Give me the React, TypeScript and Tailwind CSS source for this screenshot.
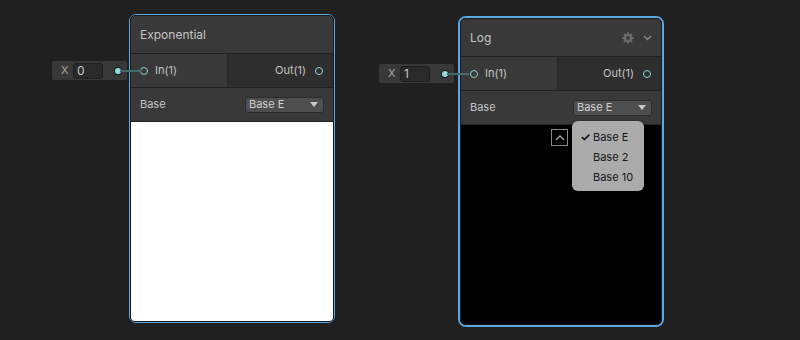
import React from "react";

const font = { fontFamily: "Inter, 'Noto Sans', sans-serif" };

function Gear() {
  return (
    <svg width="12" height="12" viewBox="0 0 12 12">
      <g fill="#6a6a6a">
        <circle cx="6" cy="6" r="4.3" />
        <rect x="5" y="0.3" width="2" height="2.4" />
        <rect x="5" y="9.3" width="2" height="2.4" />
        <rect x="0.3" y="5" width="2.4" height="2" />
        <rect x="9.3" y="5" width="2.4" height="2" />
        <rect x="5" y="0.3" width="2" height="2.4" transform="rotate(45 6 6)" />
        <rect x="5" y="9.3" width="2" height="2.4" transform="rotate(45 6 6)" />
        <rect x="0.3" y="5" width="2.4" height="2" transform="rotate(45 6 6)" />
        <rect x="9.3" y="5" width="2.4" height="2" transform="rotate(45 6 6)" />
      </g>
      <circle cx="6" cy="6" r="1.9" fill="#393939" />
    </svg>
  );
}

function ChevronDown() {
  return (
    <svg width="9" height="6" viewBox="0 0 9 6">
      <path d="M1 1 L4.5 4.5 L8 1" stroke="#8a8a8a" strokeWidth="1.4" fill="none" />
    </svg>
  );
}

function Port({ filled }: { filled?: boolean }) {
  return filled ? (
    <span className="block w-[6px] h-[6px] rounded-full bg-[#8fdde3] ring-1 ring-[#1d1d1d]" />
  ) : (
    <span className="block w-[8px] h-[8px] rounded-full border border-[#8fd2d8]" />
  );
}

function InputField({ value }: { value: string }) {
  return (
    <div className="flex items-center w-[75px] h-[19px] bg-[#383838] rounded-[2px]">
      <span className="ml-[9px] w-[12px] text-[11px] text-[#a8a8a8]">X</span>
      <div className="w-[30px] h-[16px] bg-[#2a2a2a] border border-[#1e1e1e] rounded-[3px] flex items-center pl-[3px] text-[12px] text-[#c8c8c8] leading-none">
        {value}
      </div>
      <div className="ml-[12px]">
        <Port filled />
      </div>
    </div>
  );
}

function Dropdown() {
  return (
    <div className="flex items-center justify-between w-[79px] h-[16px] bg-[#4e4e4e] border border-[#2c2c2c] rounded-[3px] pl-[3px] pr-[5px] text-[11px] text-[#d0d0d0]">
      <span>Base E</span>
      <svg width="8" height="5" viewBox="0 0 8 5">
        <path d="M0 0 L8 0 L4 5 Z" fill="#c8c8c8" />
      </svg>
    </div>
  );
}

function NodeBody({ title, icons, dark }: { title: string; icons?: boolean; dark?: boolean }) {
  return (
    <div className="flex flex-col h-full border border-[#1a1a1a] rounded-[5px] overflow-hidden bg-[#393939]">
      <div className="flex items-center justify-between h-[38px] border-b border-[#232323] pl-[9px] pr-[9px] text-[12px] text-[#c4c4c4]">
        <span>{title}</span>
        {icons && (
          <div className="flex items-center gap-[9px]">
            <Gear />
            <ChevronDown />
          </div>
        )}
      </div>
      <div className="flex h-[34px] border-b border-[#232323] text-[11px] text-[#c4c4c4]">
        <div className="flex items-center w-[97px] border-r border-[#262626] pl-[9px] gap-[7px]">
          <Port />
          <span>In(1)</span>
        </div>
        <div className="flex flex-1 items-center justify-end bg-[#2e2e2e] pr-[10px] gap-[9px]">
          <span>Out(1)</span>
          <Port />
        </div>
      </div>
      <div className="flex items-center justify-between h-[34px] border-b border-[#232323] pl-[9px] pr-[9px] text-[11px] text-[#c4c4c4]">
        <span>Base</span>
        <Dropdown />
      </div>
      <div className={dark ? "flex-1 bg-black" : "flex-1 bg-white"} />
    </div>
  );
}

export default function App() {
  return (
    <div className="relative w-[800px] h-[340px] bg-[#202020] overflow-hidden" style={font}>
      <div className="absolute left-[52px] top-[61px]">
        <InputField value="0" />
      </div>
      <div className="absolute left-[129px] top-[14px] w-[206px] h-[309px] border border-[#5aa8e4] rounded-[7px]">
        <NodeBody title="Exponential" />
      </div>
      <div className="absolute left-[120px] top-[70px] w-[21px] h-[2px] bg-[#46696a]" />

      <div className="absolute left-[379px] top-[64px]">
        <InputField value="1" />
      </div>
      <div className="absolute left-[458px] top-[16px] w-[206px] h-[311px] border-2 border-[#5aa8e4] rounded-[8px]">
        <NodeBody title="Log" icons dark />
      </div>
      <div className="absolute left-[447px] top-[73px] w-[22px] h-[2px] bg-[#46696a]" />

      <div className="absolute left-[551px] top-[129px] w-[17px] h-[17px] border border-[#8a8a8a] flex items-center justify-center">
        <svg width="10" height="6" viewBox="0 0 10 6">
          <path d="M1 5 L5 1 L9 5" stroke="#9a9a9a" strokeWidth="1.5" fill="none" />
        </svg>
      </div>
      <div className="absolute left-[572px] top-[121px] w-[72px] h-[70px] bg-[#ababab] rounded-[6px] py-[6px] text-[11px] text-[#161616] shadow-[0_1px_3px_rgba(0,0,0,0.5)]">
        {["Base E", "Base 2", "Base 10"].map((t, i) => (
          <div key={t} className="flex items-center h-[20px]">
            <span className="w-[21px] pl-[8px] text-[12px] font-bold">{i === 0 ? "✓" : ""}</span>
            <span>{t}</span>
          </div>
        ))}
      </div>
    </div>
  );
}
